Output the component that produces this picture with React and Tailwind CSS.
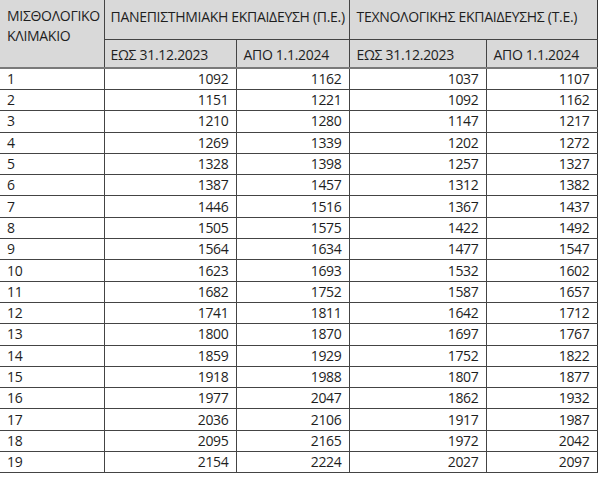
const rows = [
  [1, 1092, 1162, 1037, 1107],
  [2, 1151, 1221, 1092, 1162],
  [3, 1210, 1280, 1147, 1217],
  [4, 1269, 1339, 1202, 1272],
  [5, 1328, 1398, 1257, 1327],
  [6, 1387, 1457, 1312, 1382],
  [7, 1446, 1516, 1367, 1437],
  [8, 1505, 1575, 1422, 1492],
  [9, 1564, 1634, 1477, 1547],
  [10, 1623, 1693, 1532, 1602],
  [11, 1682, 1752, 1587, 1657],
  [12, 1741, 1811, 1642, 1712],
  [13, 1800, 1870, 1697, 1767],
  [14, 1859, 1929, 1752, 1822],
  [15, 1918, 1988, 1807, 1877],
  [16, 1977, 2047, 1862, 1932],
  [17, 2036, 2106, 1917, 1987],
  [18, 2095, 2165, 1972, 2042],
  [19, 2154, 2224, 2027, 2097],
];

const App = () => {
  return (
    <div className="w-[600px] h-[477px] bg-white overflow-hidden text-[#1e1e1e] [font-family:'Open_Sans',sans-serif] text-[14px] tracking-[-0.3px]">
      <table className="table-fixed border-collapse w-[597px] border-r border-b border-[#333]">
        <colgroup>
          <col className="w-[104px]" />
          <col className="w-[132px]" />
          <col className="w-[113px]" />
          <col className="w-[137px]" />
          <col className="w-[111px]" />
        </colgroup>
        <thead className="bg-[#d9d9d9]">
          <tr className="h-[39px]">
            <td rowSpan={2} className="align-top pl-[7px] pt-[6px] leading-[20px] border-r border-b-2 border-[#444] border-b-[#7a7a7a]">
              ΜΙΣΘΟΛΟΓΙΚΟ<br />ΚΛΙΜΑΚΙΟ
            </td>
            <td colSpan={2} className="align-top pl-[6px] pt-[7px] leading-[20px] whitespace-nowrap border-r border-b border-[#444]">
              ΠΑΝΕΠΙΣΤΗΜΙΑΚΗ ΕΚΠΑΙΔΕΥΣΗ (Π.Ε.)
            </td>
            <td colSpan={2} className="align-top pl-[7px] pt-[7px] leading-[20px] whitespace-nowrap border-b border-[#444]">
              ΤΕΧΝΟΛΟΓΙΚΗΣ ΕΚΠΑΙΔΕΥΣΗΣ (Τ.Ε.)
            </td>
          </tr>
          <tr className="h-[29px]">
            <td className="pl-[6px] pt-[2px] whitespace-nowrap border-r border-b-2 border-[#444] border-b-[#7a7a7a]">ΕΩΣ 31.12.2023</td>
            <td className="pl-[7px] pt-[2px] whitespace-nowrap border-r border-b-2 border-[#444] border-b-[#7a7a7a]">ΑΠΟ 1.1.2024</td>
            <td className="pl-[7px] pt-[2px] whitespace-nowrap border-r border-b-2 border-[#444] border-b-[#7a7a7a]">ΕΩΣ 31.12.2023</td>
            <td className="pl-[7px] pt-[2px] whitespace-nowrap border-b-2 border-[#7a7a7a]">ΑΠΟ 1.1.2024</td>
          </tr>
        </thead>
        <tbody>
          {rows.map((r) => (
            <tr key={r[0]} className="h-[21.3px]">
              <td className="pl-[7px] leading-[20px] border-r border-b border-[#444]">{r[0]}</td>
              <td className="pr-[7px] text-right leading-[20px] border-r border-b border-[#444]">{r[1]}</td>
              <td className="pr-[7px] text-right leading-[20px] border-r border-b border-[#444]">{r[2]}</td>
              <td className="pr-[7px] text-right leading-[20px] border-r border-b border-[#444]">{r[3]}</td>
              <td className="pr-[7px] text-right leading-[20px] border-b border-[#444]">{r[4]}</td>
            </tr>
          ))}
        </tbody>
      </table>
    </div>
  );
};

export default App;
